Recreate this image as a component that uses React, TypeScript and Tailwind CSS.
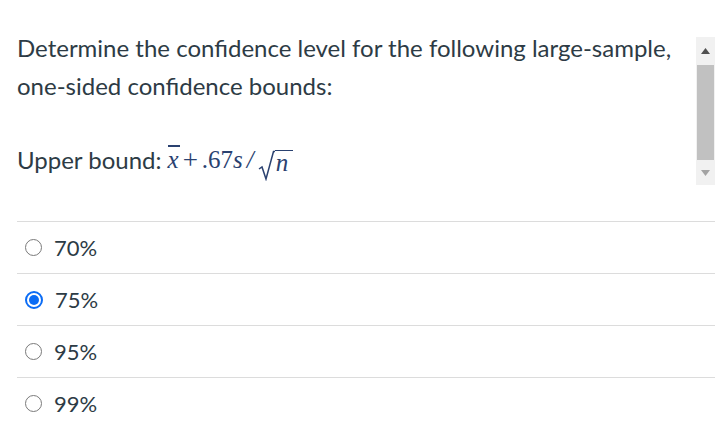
import React from "react";

const options = [
  { label: "70%", checked: false },
  { label: "75%", checked: true },
  { label: "95%", checked: false },
  { label: "99%", checked: false },
];

function Radio({ checked }: { checked: boolean }) {
  if (checked) {
    return (
      <span className="flex h-[18px] w-[18px] items-center justify-center rounded-full border-[2px] border-[#0b6cf5]">
        <span className="h-[10px] w-[10px] rounded-full bg-[#0b6cf5]" />
      </span>
    );
  }
  return <span className="h-[17px] w-[17px] rounded-full border-[1.5px] border-[#7a7a7a]" />;
}

export default function App() {
  return (
    <div className="min-h-[442px] w-[728px] bg-white pl-[17px] pr-[13px] pt-[29px] font-['Lato','Open_Sans',sans-serif] text-[#2d3b45]">
      <div className="flex">
        <div className="flex-1 text-[24px] leading-[38px]">
          <p>Determine the confidence level for the following large-sample, one-sided confidence bounds:</p>
          <p className="mt-[36px] flex items-center">
            <span>Upper bound:</span>
            <span className="ml-[6px] flex items-center font-['Liberation_Serif',serif] text-[25px] text-[#2a4170]">
              <span className="relative italic">
                x
                <span className="absolute left-[0px] right-[-1px] top-[4px] h-[1.5px] bg-[#2a4170]" />
              </span>
              <span className="mx-[4px] text-[27px]">+</span>
              <span>.67</span>
              <span className="italic">s</span>
              <span className="mx-[4px] italic">/</span>
              <span className="flex items-end">
                <svg width="17" height="31" viewBox="0 0 17 31" className="mb-[-6px]">
                  <path d="M1 19 L4 17 L8 29 L15.5 1.5 L17 1.5" fill="none" stroke="#2a4170" strokeWidth="1.5" />
                </svg>
                <span className="mt-[4px] border-t-[1.5px] border-[#2a4170] pl-[1px] pr-[5px] leading-[24px] italic">n</span>
              </span>
            </span>
          </p>
        </div>
        <div className="ml-[6px] mt-[8px] flex h-[148px] w-[19px] flex-col items-center bg-[#f1f1f1]">
          <div className="flex h-[28px] items-center justify-center">
            <svg width="9" height="6" viewBox="0 0 9 6">
              <path d="M0 6 L4.5 0 L9 6 Z" fill="#505050" />
            </svg>
          </div>
          <div className="h-[95px] w-[17px] bg-[#c1c1c1]" />
          <div className="flex h-[25px] items-center justify-center">
            <svg width="9" height="6" viewBox="0 0 9 6">
              <path d="M0 0 L4.5 6 L9 0 Z" fill="#a3a3a3" />
            </svg>
          </div>
        </div>
      </div>
      <div className="mt-[36px]">
        {options.map((o) => (
          <div key={o.label} className="flex h-[52px] items-center border-t border-[#dcdcdc] pl-[8px]">
            <Radio checked={o.checked} />
            <span className="ml-[12px] text-[22px]">{o.label}</span>
          </div>
        ))}
      </div>
    </div>
  );
}
